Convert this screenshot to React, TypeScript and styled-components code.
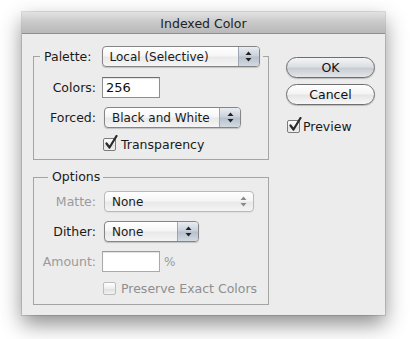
import React from 'react';
import styled, { createGlobalStyle } from 'styled-components';

const GlobalStyle = createGlobalStyle`
  html, body {
    margin: 0;
    padding: 0;
    background: #fff;
  }
  body {
    width: 411px;
    height: 339px;
    overflow: hidden;
    font-family: "DejaVu Sans", "Liberation Sans", sans-serif;
    font-size: 12px;
    color: #1a1a1a;
  }
`;

const Dialog = styled.div`
  margin: 12px 0 0 22px;
  width: 363px;
  height: 303px;
  background: #ececec;
  box-shadow: 0 9px 20px rgba(0, 0, 0, 0.45), 0 0 0 1px rgba(0, 0, 0, 0.12);
  display: flex;
  flex-direction: column;
`;

const TitleBar = styled.div`
  height: 22px;
  box-sizing: border-box;
  padding-top: 1px;
  border-bottom: 1px solid #8e8e8e;
  background: linear-gradient(#e2e2e2, #c9c9c9 50%, #b9b9b9);
  display: flex;
  align-items: center;
  justify-content: center;
  font-size: 12.5px;
  color: #222;
`;

const Body = styled.div`
  display: flex;
  padding: 12px 10px 0 11px;
  gap: 17px;
`;

const LeftColumn = styled.div`
  width: 236px;
  display: flex;
  flex-direction: column;
`;

const RightColumn = styled.div`
  width: 89px;
  margin-top: 11px;
  display: flex;
  flex-direction: column;
`;

const Group = styled.fieldset<{ $spaced?: boolean }>`
  margin: ${(p) => (p.$spaced ? '9px' : '0')} 0 0 0;
  padding: 0;
  border: 1px solid #a4a4a4;
  min-width: 0;
`;

const Legend = styled.legend<{ $offset: number }>`
  margin-left: ${(p) => p.$offset}px;
  padding: 0 3px 0 4px;
  display: flex;
  align-items: center;
  line-height: 16px;
  font-size: 12.5px;
`;

const LegendLabel = styled.span`
  margin-right: 10px;
  font-size: 12.5px;
`;

const Rows = styled.div<{ $top: number; $bottom: number }>`
  display: grid;
  grid-template-columns: 62px auto;
  column-gap: 6px;
  row-gap: 9px;
  align-items: center;
  padding: ${(p) => p.$top}px 0 ${(p) => p.$bottom}px 0;
`;

const Label = styled.label<{ $disabled?: boolean }>`
  text-align: right;
  font-size: 12.5px;
  color: ${(p) => (p.$disabled ? '#9b9b9b' : '#1a1a1a')};
`;

const ControlCell = styled.div`
  display: flex;
  align-items: center;
`;

const SelectBox = styled.div<{ $width: number; $disabled?: boolean; $shift: number }>`
  width: ${(p) => p.$width}px;
  height: 21px;
  box-sizing: border-box;
  margin-left: ${(p) => p.$shift}px;
  border: 1px solid ${(p) => (p.$disabled ? '#b9b9b9' : '#858585')};
  border-radius: 4px;
  background: linear-gradient(#ffffff, #f6f6f6 45%, #e9e9e9 55%, #f5f5f5);
  box-shadow: 0 1px 1px rgba(0, 0, 0, ${(p) => (p.$disabled ? 0.05 : 0.18)});
  display: flex;
  align-items: stretch;
  overflow: hidden;
`;

const SelectText = styled.span`
  flex: 1;
  padding-left: 7px;
  display: flex;
  align-items: center;
  font-size: 12px;
  color: #1a1a1a;
  white-space: nowrap;
`;

const Stepper = styled.span<{ $disabled?: boolean }>`
  width: 20px;
  display: flex;
  align-items: center;
  justify-content: center;
  border-left: 1px solid ${(p) => (p.$disabled ? 'transparent' : '#9da6b2')};
  background: ${(p) =>
    p.$disabled
      ? 'transparent'
      : 'linear-gradient(#e9edf2, #c9d0da 48%, #b6c0cd 52%, #d4dae2)'};
`;

const TextField = styled.div<{ $disabled?: boolean }>`
  width: 58px;
  height: 21px;
  box-sizing: border-box;
  border: 1px solid ${(p) => (p.$disabled ? '#aaaaaa' : '#8e8e8e')};
  border-top-color: ${(p) => (p.$disabled ? '#9a9a9a' : '#6f6f6f')};
  background: #fff;
  box-shadow: inset 0 1px 1px rgba(0, 0, 0, 0.12);
  padding-left: 3px;
  display: flex;
  align-items: center;
  font-size: 13px;
  color: #111;
`;

const Unit = styled.span`
  margin-left: 4px;
  color: #9b9b9b;
  font-size: 12px;
`;

const CheckRow = styled.label<{ $disabled?: boolean }>`
  grid-column: 2;
  display: flex;
  align-items: center;
  gap: 5px;
  margin-left: 1px;
  font-size: 12.5px;
  color: ${(p) => (p.$disabled ? '#8f8f8f' : '#1a1a1a')};
`;

const Box = styled.span<{ $disabled?: boolean }>`
  width: 13px;
  height: 13px;
  box-sizing: border-box;
  border: 1px solid ${(p) => (p.$disabled ? '#bcbcbc' : '#7a7a7a')};
  border-radius: 2px;
  background: linear-gradient(#ffffff, #ededed 50%, #dedede 51%, #f2f2f2);
  position: relative;
  flex: none;
`;

const Tick = styled.svg`
  position: absolute;
  left: 1px;
  top: -4px;
`;

const Button = styled.div<{ $default?: boolean }>`
  height: 21px;
  box-sizing: border-box;
  border: 1px solid #6e6e6e;
  border-radius: 11px;
  background: ${(p) =>
    p.$default
      ? 'linear-gradient(#f4f5f7, #dcdfe3 45%, #c9cdd3 55%, #e3e6ea)'
      : 'linear-gradient(#ffffff, #f4f4f4 45%, #e6e6e6 55%, #f7f7f7)'};
  box-shadow: 0 1px 1px rgba(0, 0, 0, 0.2);
  display: flex;
  align-items: center;
  justify-content: center;
  font-size: 12.5px;
  color: #111;
  & + & {
    margin-top: 6px;
  }
`;

const PreviewRow = styled(CheckRow)`
  margin: 14px 0 0 1px;
  gap: 3px;
`;

const Arrows = ({ disabled }: { disabled?: boolean }) => (
  <svg width="7" height="11" viewBox="0 0 7 11">
    <path d="M3.5 0.5 L6.5 4 L0.5 4 Z" fill={disabled ? '#8a8a8a' : '#222'} />
    <path d="M3.5 10.5 L6.5 7 L0.5 7 Z" fill={disabled ? '#8a8a8a' : '#222'} />
  </svg>
);

const Select = ({ value, width, disabled, shift = 2 }: { value: string; width: number; disabled?: boolean; shift?: number }) => (
  <SelectBox $width={width} $disabled={disabled} $shift={shift}>
    <SelectText>{value}</SelectText>
    <Stepper $disabled={disabled}>
      <Arrows disabled={disabled} />
    </Stepper>
  </SelectBox>
);

const Checkbox = ({ checked, disabled }: { checked?: boolean; disabled?: boolean }) => (
  <Box $disabled={disabled}>
    {checked && (
      <Tick width="13" height="15" viewBox="0 0 13 15">
        <path d="M1.5 8.5 L4.5 12.5 L11.5 1" stroke="#2a2a2a" strokeWidth="2.2" fill="none" strokeLinecap="round" strokeLinejoin="round" />
      </Tick>
    )}
  </Box>
);

export default function App() {
  return (
    <>
      <GlobalStyle />
      <Dialog>
        <TitleBar>Indexed Color</TitleBar>
        <Body>
          <LeftColumn>
            <Group>
              <Legend $offset={6}>
                <LegendLabel>Palette:</LegendLabel>
                <Select value="Local (Selective)" width={158} shift={0} />
              </Legend>
              <Rows $top={10} $bottom={7}>
                <Label>Colors:</Label>
                <ControlCell>
                  <TextField>256</TextField>
                </ControlCell>
                <Label>Forced:</Label>
                <ControlCell>
                  <Select value="Black and White" width={137} />
                </ControlCell>
                <CheckRow>
                  <Checkbox checked />
                  Transparency
                </CheckRow>
              </Rows>
            </Group>
            <Group $spaced>
              <Legend $offset={14}>Options</Legend>
              <Rows $top={6} $bottom={8}>
                <Label $disabled>Matte:</Label>
                <ControlCell>
                  <Select value="None" width={150} disabled />
                </ControlCell>
                <Label>Dither:</Label>
                <ControlCell>
                  <Select value="None" width={95} />
                </ControlCell>
                <Label $disabled>Amount:</Label>
                <ControlCell>
                  <TextField $disabled />
                  <Unit>%</Unit>
                </ControlCell>
                <CheckRow $disabled>
                  <Checkbox disabled />
                  Preserve Exact Colors
                </CheckRow>
              </Rows>
            </Group>
          </LeftColumn>
          <RightColumn>
            <Button $default>OK</Button>
            <Button>Cancel</Button>
            <PreviewRow>
              <Checkbox checked />
              Preview
            </PreviewRow>
          </RightColumn>
        </Body>
      </Dialog>
    </>
  );
}
